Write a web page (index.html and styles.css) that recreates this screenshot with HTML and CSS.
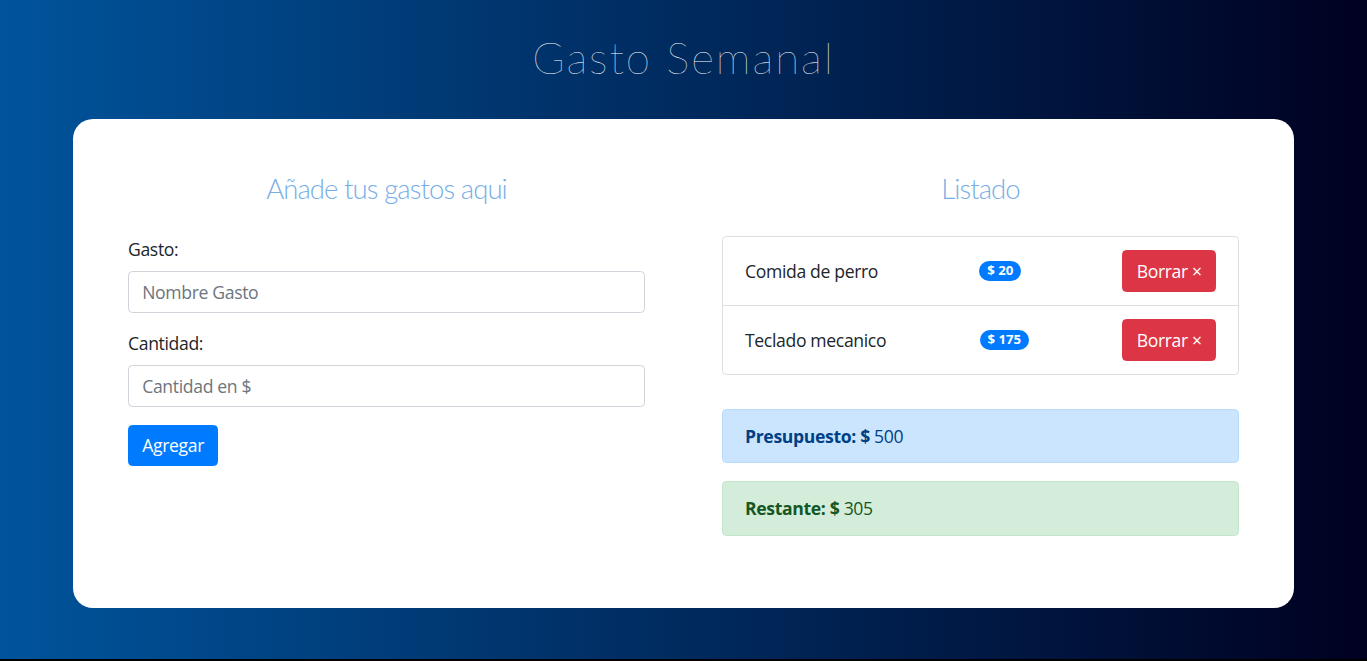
FILE: index.html
```html
<!DOCTYPE html>
<html lang="es">
<head>
<meta charset="utf-8">
<title>Gasto Semanal</title>
<link rel="stylesheet" href="styles.css">
</head>
<body>
<div class="app">
  <header class="header">
    <h1 class="title">Gasto Semanal</h1>
  </header>
  <main class="card">
    <section class="col">
      <h2 class="col-title">Añade tus gastos aqui</h2>
      <form class="form">
        <div class="field">
          <label class="label" for="gasto">Gasto:</label>
          <input class="input" id="gasto" type="text" placeholder="Nombre Gasto">
        </div>
        <div class="field">
          <label class="label" for="cantidad">Cantidad:</label>
          <input class="input" id="cantidad" type="text" placeholder="Cantidad en $">
        </div>
        <button class="btn btn-primary" type="button">Agregar</button>
      </form>
    </section>
    <section class="col">
      <h2 class="col-title">Listado</h2>
      <ul class="list">
        <li class="item">
          <span class="item-name">Comida de perro</span>
          <span class="badge">$ 20</span>
          <button class="btn btn-danger" type="button">Borrar &times;</button>
        </li>
        <li class="item">
          <span class="item-name">Teclado mecanico</span>
          <span class="badge">$ 175</span>
          <button class="btn btn-danger" type="button">Borrar &times;</button>
        </li>
      </ul>
      <div class="alert alert-primary"><strong>Presupuesto: $</strong> 500</div>
      <div class="alert alert-success"><strong>Restante: $</strong> 305</div>
    </section>
  </main>
</div>
</body>
</html>
```

FILE: styles.css
```css
html {
  font-size: 17.6px;
  background: #000;
}

body {
  margin: 0;
  font-family: "Open Sans", "Noto Sans", sans-serif;
  font-size: 1rem;
  line-height: 1.5;
  letter-spacing: -0.35px;
  color: #212529;
}

.app {
  min-height: 659px;
  background: linear-gradient(90deg, #00549c 0%, #000121 100%);
  display: flex;
  flex-direction: column;
}

.header {
  padding-top: 31px;
  padding-bottom: 35px;
  text-align: center;
}

.title {
  margin: 0;
  font-family: Lato, "Open Sans", sans-serif;
  font-weight: 200;
  font-size: 44px;
  line-height: 1.2;
  letter-spacing: 1.9px;
  color: #fff;
}

.card {
  margin: 0 73px;
  background: #fff;
  border-radius: 20px;
  padding: 55px;
  display: grid;
  grid-template-columns: 1fr 1fr;
  column-gap: 77px;
}

.col {
  min-width: 0;
}

.col-title {
  margin: -2px 0 31px;
  text-align: center;
  font-family: Lato, "Open Sans", sans-serif;
  font-weight: 300;
  font-size: 27.5px;
  line-height: 1.2;
  letter-spacing: -0.9px;
  color: #78aee6;
}

.form {
  margin: 0;
}

.field {
  margin-bottom: 1rem;
}

.label {
  display: block;
  margin-bottom: .5rem;
}

.input {
  display: block;
  box-sizing: border-box;
  width: 100%;
  height: 41.6px;
  padding: .375rem .75rem;
  font-family: inherit;
  font-size: 1rem;
  line-height: 1.5;
  letter-spacing: inherit;
  color: #495057;
  background: #fff;
  border: 1px solid #ced4da;
  border-radius: .25rem;
}

.input::placeholder {
  color: #6c757d;
  opacity: 1;
}

.btn {
  display: inline-block;
  padding: .375rem .75rem;
  font-family: inherit;
  font-size: 1rem;
  line-height: 1.5;
  letter-spacing: inherit;
  border: 1px solid transparent;
  border-radius: .25rem;
  color: #fff;
  cursor: pointer;
}

.btn-primary {
  background: #007bff;
  border-color: #007bff;
}

.btn-danger {
  background: #dc3545;
  border-color: #dc3545;
}

.list {
  list-style: none;
  margin: 0 0 34px;
  padding: 0;
  border: 1px solid rgba(0, 0, 0, .125);
  border-radius: .25rem;
}

.item {
  display: flex;
  align-items: center;
  justify-content: space-between;
  padding: .75rem 1.25rem;
}

.item + .item {
  border-top: 1px solid rgba(0, 0, 0, .125);
}

.badge {
  display: inline-block;
  padding: .25em .6em;
  font-size: 75%;
  font-weight: 700;
  line-height: 1;
  letter-spacing: 0;
  color: #fff;
  background: #007bff;
  border-radius: 10rem;
}

.alert {
  padding: .75rem 1.25rem;
  margin-bottom: 1rem;
  border: 1px solid transparent;
  border-radius: .25rem;
}

.alert strong {
  font-weight: 700;
}

.alert-primary {
  color: #004085;
  background: #cce5ff;
  border-color: #b8daff;
}

.alert-success {
  color: #155724;
  background: #d4edda;
  border-color: #c3e6cb;
}
```
